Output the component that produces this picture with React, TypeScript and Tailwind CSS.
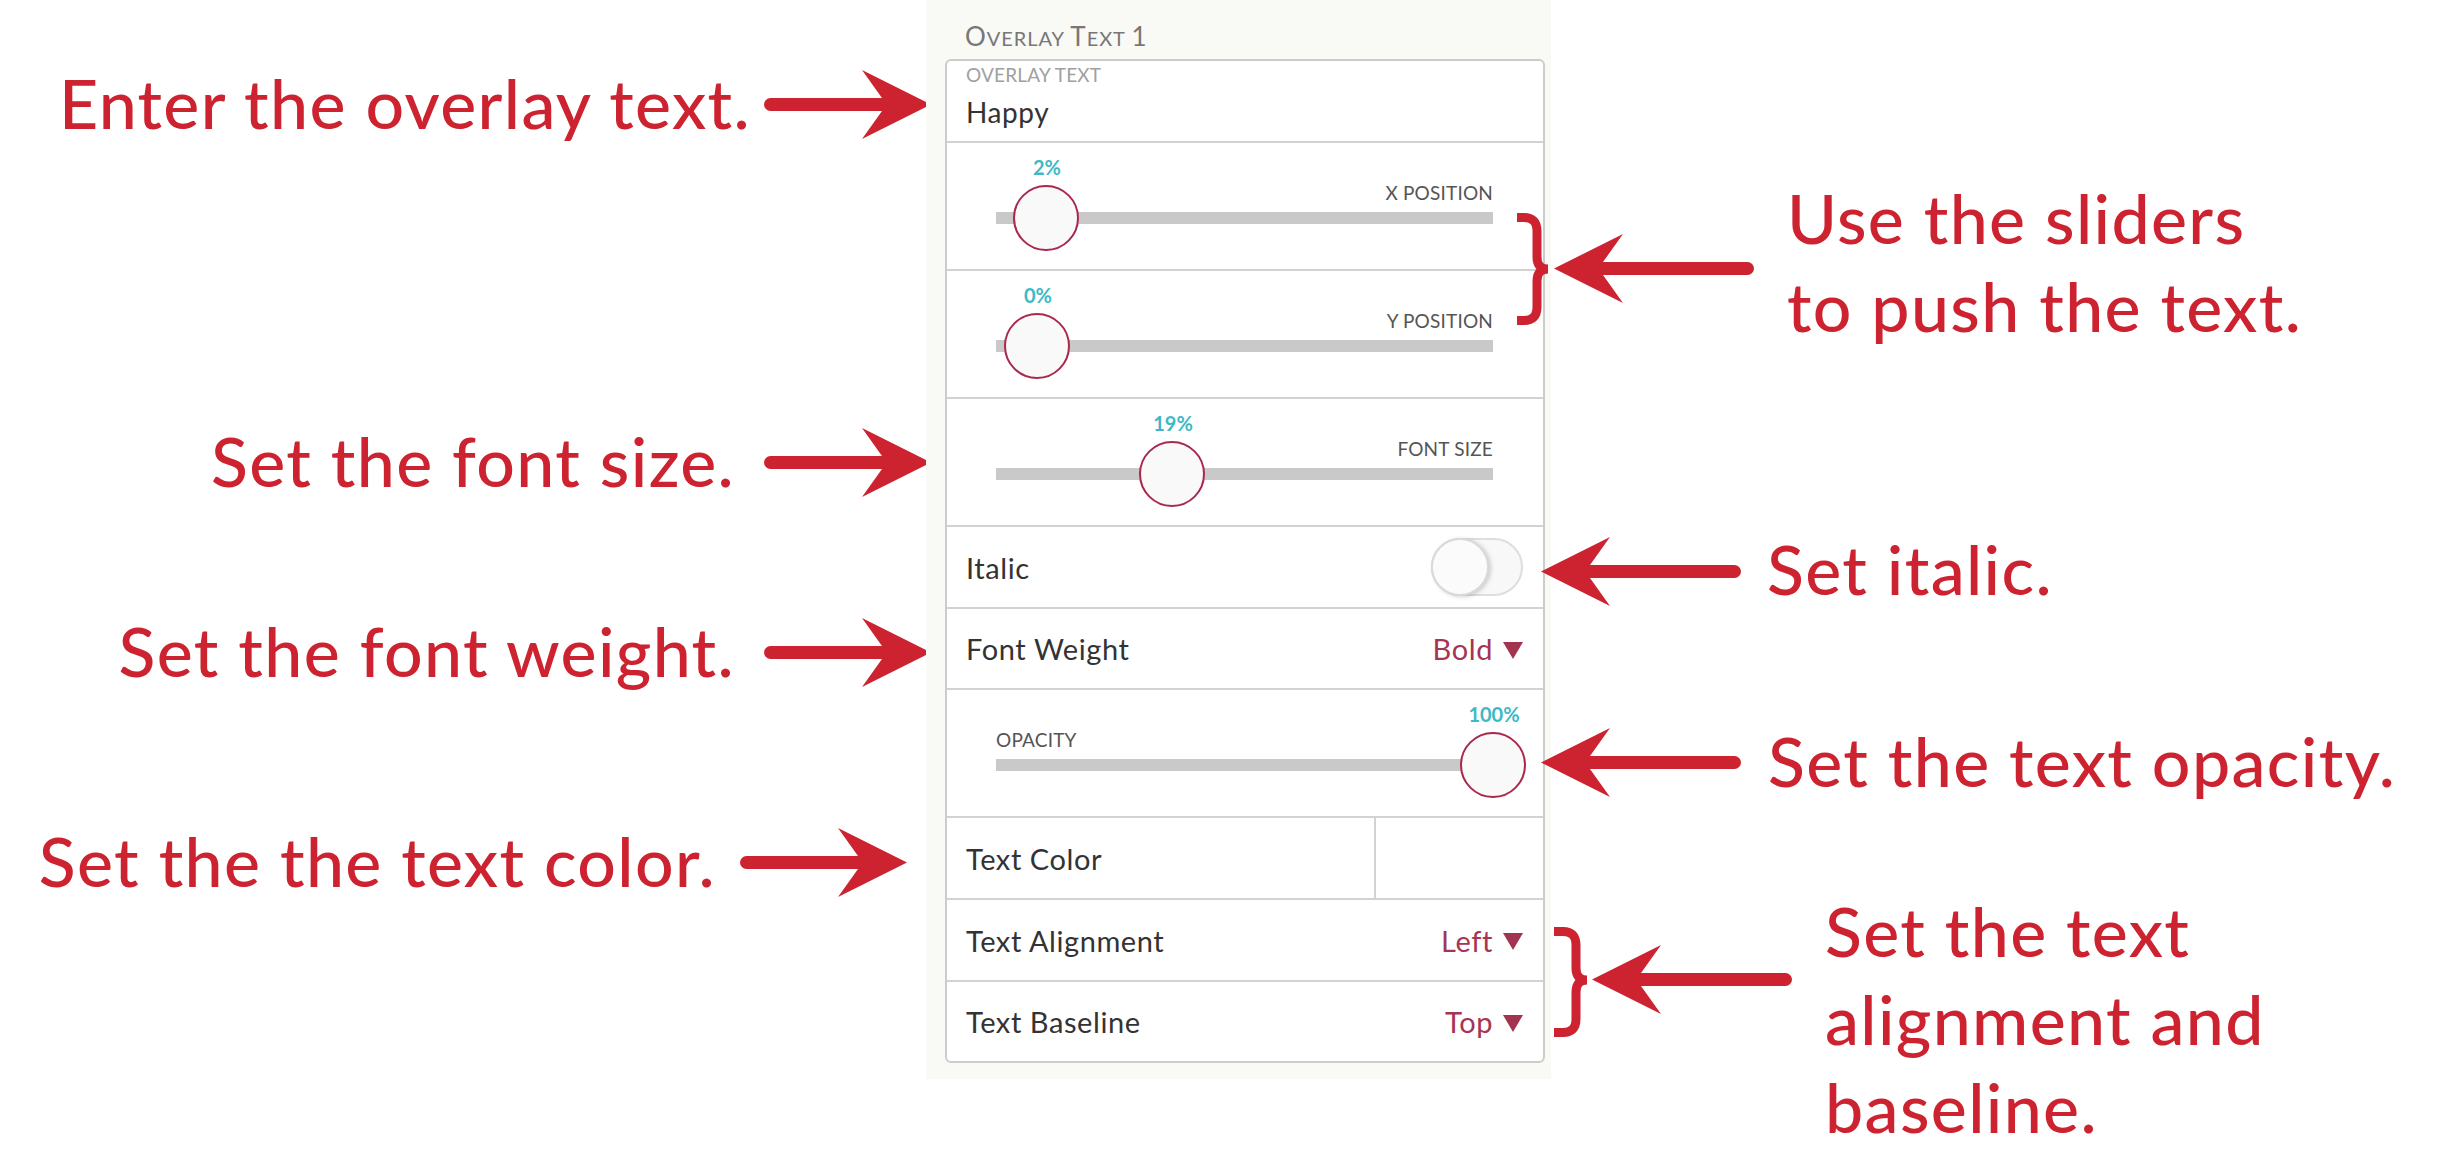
import React from "react";

const RED = "#cd2330";

function ArrowRight() {
  return (
    <svg width="167" height="69" viewBox="0 0 167 69" className="shrink-0">
      <path
        d="M6.5 28 L118 28 L98 0 L167 34.5 L98 69 L118 41 L6.5 41 A6.5 6.5 0 0 1 6.5 28 Z"
        fill={RED}
      />
    </svg>
  );
}

function ArrowLeft() {
  return (
    <svg width="200" height="69" viewBox="0 0 200 69" className="shrink-0">
      <path
        d="M0 34.5 L69 0 L49 28 L193.5 28 A6.5 6.5 0 0 1 193.5 41 L49 41 L69 69 Z"
        fill={RED}
      />
    </svg>
  );
}

function Brace({ w, h, d }: { w: number; h: number; d: string }) {
  return (
    <svg width={w} height={h} viewBox={`0 0 ${w} ${h}`} className="shrink-0 overflow-visible">
      <path d={d} fill="none" stroke={RED} strokeWidth="9" strokeLinejoin="miter" />
    </svg>
  );
}

function Note({ children }: { children: React.ReactNode }) {
  return (
    <div className="whitespace-nowrap text-[68px] font-medium leading-[88px] tracking-[0.02em] text-[#cd2330]">
      {children}
    </div>
  );
}

type SliderProps = { label: string; value: string; center: number; labelLeft?: boolean };

function SliderRow({ label, value, center, labelLeft }: SliderProps) {
  return (
    <div className="h-[128px] border-t-2 border-[#d2d2d2] pl-[49px] pr-[50px] pt-[40px]">
      <div
        className={`h-[19px] whitespace-nowrap text-[19px] leading-none tracking-[0.01em] text-[#555555] ${
          labelLeft ? "text-left" : "text-right"
        }`}
      >
        {label}
      </div>
      <div className="relative mt-[10px] h-[12px] bg-[#c9c9c9]">
        <span
          className="absolute top-[-55px] -translate-x-1/2 whitespace-nowrap text-[20px] font-bold leading-none text-[#3db9c6]"
          style={{ left: center + 1 }}
        >
          {value}
        </span>
        <span
          className="absolute top-[-27px] h-[66px] w-[66px] rounded-full border-2 border-[#a8294c] bg-[#f9f9f9]"
          style={{ left: center - 33 }}
        />
      </div>
    </div>
  );
}

function Dropdown({ value }: { value: string }) {
  return (
    <span className="flex items-center text-[29px] leading-none tracking-[0.02em] text-[#a63453]">
      {value}
      <svg width="20" height="17" viewBox="0 0 20 17" className="ml-[10px] mt-[3px]">
        <path d="M0 0 H20 L10 17 Z" fill="#a3344f" />
      </svg>
    </span>
  );
}

function ShortRow({
  label,
  right,
  tall = true,
}: {
  label: string;
  right?: React.ReactNode;
  tall?: boolean;
}) {
  return (
    <div
      className={`flex items-center justify-between border-t-2 border-[#d2d2d2] pl-[19px] pr-[20px] ${
        tall ? "h-[82px]" : "h-[81px]"
      }`}
    >
      <span className="whitespace-nowrap text-[29px] leading-none tracking-[0.02em] text-[#333333]">
        {label}
      </span>
      {right}
    </div>
  );
}

function Toggle() {
  return (
    <span className="relative block h-[58px] w-[92px] rounded-full border-2 border-[#dedede] bg-[#f8f8f8]">
      <span className="absolute left-[-2px] top-[-2px] h-[58px] w-[58px] rounded-full border-2 border-[#dadada] bg-[#fbfbfb] shadow-[2px_1px_4px_rgba(0,0,0,0.18)]" />
    </span>
  );
}

function Panel() {
  return (
    <div className="h-[1079px] w-[625px] shrink-0 bg-[#f9f9f6] pl-[19px] pr-[6px] pt-[23px]">
      <div className="ml-[20px] flex h-[26px] items-baseline whitespace-pre leading-none tracking-[0.06em] text-[#777777]">
        <span className="text-[26px]">O</span>
        <span className="text-[20px]">VERLAY </span>
        <span className="text-[26px]">T</span>
        <span className="text-[20px]">EXT </span>
        <span className="text-[26px]">1</span>
      </div>
      <div className="mt-[10px] rounded-[6px] border-2 border-[#cccccc] bg-white">
        <div className="h-[80px] px-[19px] pt-[4px]">
          <div className="text-[19px] leading-none tracking-[0.01em] text-[#a0a0a0]">OVERLAY TEXT</div>
          <div className="mt-[14px] text-[28px] leading-none tracking-[0.02em] text-[#333333]">Happy</div>
        </div>
        <SliderRow label="X POSITION" value="2%" center={50} />
        <SliderRow label="Y POSITION" value="0%" center={41} />
        <SliderRow label="FONT SIZE" value="19%" center={176} />
        <ShortRow label="Italic" right={<Toggle />} />
        <ShortRow label="Font Weight" right={<Dropdown value="Bold" />} tall={false} />
        <SliderRow label="OPACITY" value="100%" center={497} labelLeft />
        <div className="flex h-[82px] border-t-2 border-[#d2d2d2]">
          <div className="flex flex-1 items-center pl-[19px]">
            <span className="whitespace-nowrap text-[29px] leading-none tracking-[0.02em] text-[#333333]">
              Text Color
            </span>
          </div>
          <div className="w-[169px] border-l-2 border-[#d2d2d2]" />
        </div>
        <ShortRow label="Text Alignment" right={<Dropdown value="Left" />} />
        <ShortRow label="Text Baseline" right={<Dropdown value="Top" />} tall={false} />
      </div>
    </div>
  );
}

function LeftColumn() {
  return (
    <div className="flex w-[926px] shrink-0 flex-col items-end pt-[59px]">
      <div className="mr-[-5px] flex items-start">
        <Note>Enter the overlay text.</Note>
        <div className="ml-[13px] mt-[11px]">
          <ArrowRight />
        </div>
      </div>
      <div className="mr-[-5px] mt-[270px] flex items-start">
        <Note>Set the font size.</Note>
        <div className="ml-[29px] mt-[11px]">
          <ArrowRight />
        </div>
      </div>
      <div className="mr-[-5px] mt-[102px] flex items-start">
        <Note>Set the font weight.</Note>
        <div className="ml-[29px] mt-[11px]">
          <ArrowRight />
        </div>
      </div>
      <div className="mr-[19px] mt-[122px] flex items-start">
        <Note>Set the the text color.</Note>
        <div className="ml-[24px] mt-[11px]">
          <ArrowRight />
        </div>
      </div>
    </div>
  );
}

function RightColumn() {
  return (
    <div className="ml-[-34px] flex flex-1 flex-col items-start pt-[174px]">
      <div className="flex items-start">
        <div className="mt-[39px]">
          <Brace
            w={32}
            h={112}
            d="M0 4.5 H7 Q20 4.5 20 18 V44 Q20 56 31 56 Q20 56 20 68 V94 Q20 107.5 7 107.5 H0"
          />
        </div>
        <div className="ml-[5px] mt-[60px]">
          <ArrowLeft />
        </div>
        <div className="ml-[33px]">
          <Note>
            Use the sliders
            <br />
            to push the text.
          </Note>
        </div>
      </div>
      <div className="ml-[24px] mt-[175px] flex items-start">
        <div className="mt-[12px]">
          <ArrowLeft />
        </div>
        <div className="ml-[26px]">
          <Note>Set italic.</Note>
        </div>
      </div>
      <div className="ml-[24px] mt-[104px] flex items-start">
        <div className="mt-[11px]">
          <ArrowLeft />
        </div>
        <div className="ml-[27px]">
          <Note>Set the text opacity.</Note>
        </div>
      </div>
      <div className="ml-[37px] mt-[82px] flex items-start">
        <div className="mt-[40px]">
          <Brace
            w={34}
            h={110}
            d="M0 4.5 H9 Q22 4.5 22 18 V41 Q22 53 33 53 Q22 53 22 65 V92 Q22 105.5 9 105.5 H0"
          />
        </div>
        <div className="ml-[4px] mt-[58px]">
          <ArrowLeft />
        </div>
        <div className="ml-[33px]">
          <Note>
            Set the text
            <br />
            alignment and
            <br />
            baseline.
          </Note>
        </div>
      </div>
    </div>
  );
}

export default function App() {
  return (
    <div className="flex h-[1154px] w-[2446px] overflow-hidden bg-white [font-family:Lato,sans-serif]">
      <LeftColumn />
      <Panel />
      <RightColumn />
    </div>
  );
}
